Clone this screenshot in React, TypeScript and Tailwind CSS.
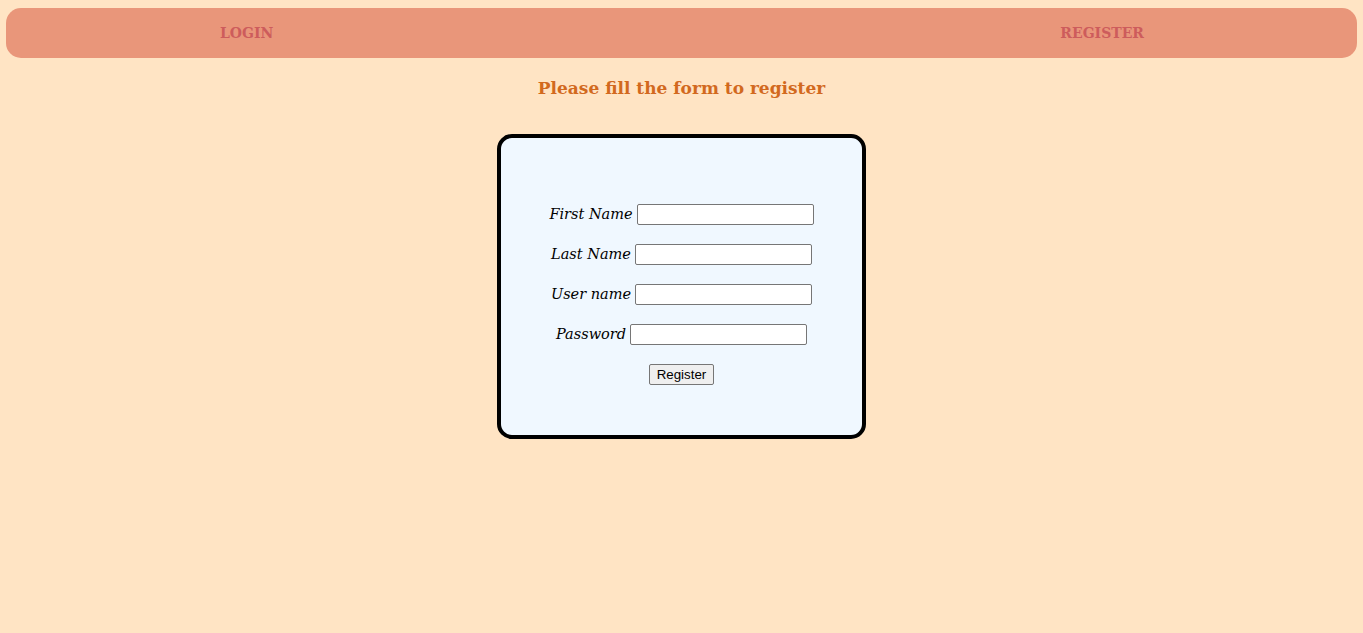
import React from "react";

const serif = { fontFamily: '"DejaVu Serif", "Liberation Serif", serif' };

function Field({ label, type = "text" }: { label: string; type?: string }) {
  return (
    <div className="flex h-[21px] items-center justify-center gap-[4px]">
      <label className="text-[14.5px] italic text-black" style={serif}>
        {label}
      </label>
      <input
        type={type}
        className="h-[21px] w-[177px] rounded-[2px] border border-[#767676] bg-white px-[2px] text-[13.33px] outline-none"
      />
    </div>
  );
}

export default function App() {
  return (
    <div className="min-h-[633px] w-full bg-[#FFE4C4]" style={serif}>
      <div className="px-[6px] pt-[8px]">
        <nav className="flex h-[50px] items-center rounded-[15px] bg-[#E9967A]">
          <a className="ml-[214px] text-[14px] font-bold text-[#CD5C5C]">LOGIN</a>
          <a className="ml-auto mr-[213px] text-[14px] font-bold text-[#CD5C5C]">REGISTER</a>
        </nav>
      </div>
      <h3 className="mt-[19px] text-center text-[17px] font-bold leading-[22px] text-[#D2691E]">
        Please fill the form to register
      </h3>
      <div className="mt-[35px] flex justify-center">
        <form className="flex w-[369px] flex-col gap-[19px] rounded-[15px] border-4 border-black bg-[#F0F8FF] pb-[50px] pt-[66px]">
          <Field label="First Name" />
          <Field label="Last Name" />
          <Field label="User name" />
          <Field label="Password" type="password" />
          <div className="flex h-[21px] justify-center">
            <button
              type="button"
              className="h-[21px] rounded-[2px] border border-[#767676] bg-[#EFEFEF] px-[7px] text-[13.33px] leading-none text-black"
              style={{ fontFamily: '"Liberation Sans", Arial, sans-serif' }}
            >
              Register
            </button>
          </div>
        </form>
      </div>
    </div>
  );
}
